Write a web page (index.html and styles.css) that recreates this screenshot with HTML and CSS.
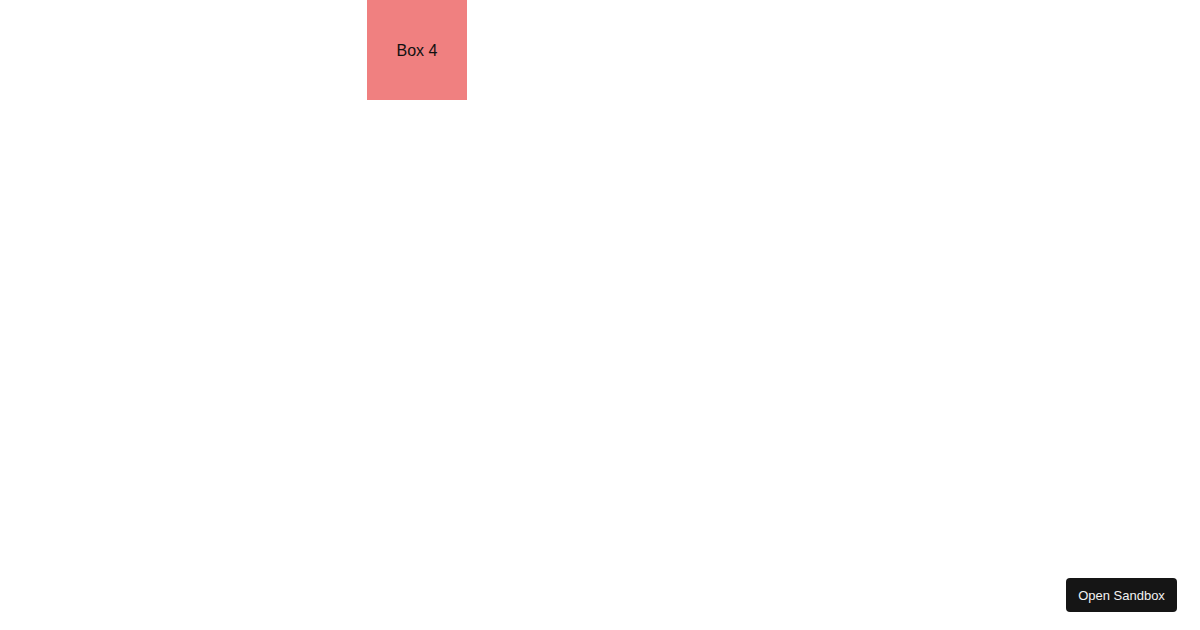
FILE: index.html
```html
<!DOCTYPE html>
<html>
<head>
<meta charset="utf-8">
<link rel="stylesheet" href="styles.css">
</head>
<body>
<div class="stage">
  <div class="box">Box 4</div>
</div>
<button class="sandbox">Open Sandbox</button>
</body>
</html>
```
FILE: styles.css
```css
html, body {
  margin: 0;
  padding: 0;
  background: #fff;
  font-family: "Liberation Sans", Arial, sans-serif;
}
.stage {
  display: flex;
  padding-left: 367px;
}
.box {
  width: 100px;
  height: 100px;
  box-sizing: border-box;
  padding-top: 2px;
  background: #f08080;
  color: #111;
  font-size: 16px;
  display: flex;
  align-items: center;
  justify-content: center;
}
.sandbox {
  position: fixed;
  right: 23px;
  bottom: 18px;
  width: 111px;
  height: 34px;
  background: #151515;
  color: #f2f2f2;
  border: none;
  border-radius: 4px;
  font-family: "Liberation Sans", Arial, sans-serif;
  font-size: 13px;
  padding: 0;
}
```
